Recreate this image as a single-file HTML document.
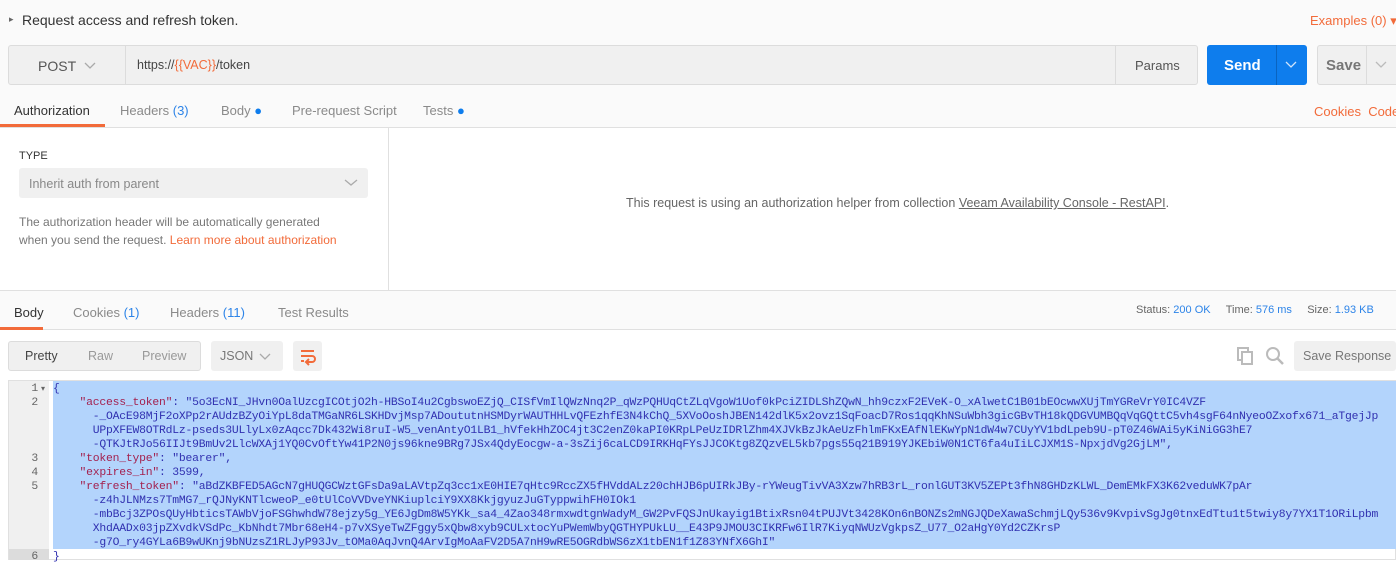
<!DOCTYPE html>
<html><head><meta charset="utf-8"><style>
*{margin:0;padding:0;box-sizing:border-box}
body{width:1396px;height:560px;overflow:hidden;background:#fff;font-family:"Liberation Sans",sans-serif;font-size:12px;color:#505050;position:relative}
.a{position:absolute;white-space:nowrap}
.or{color:#f26b3a}
.bl{color:#2d84e8}
.g{color:#8a8a8a}
.code{font-family:"Liberation Mono",monospace;font-size:11.4px;letter-spacing:-0.21px;line-height:14px;color:#3030b0}
.k{color:#a3214f}
</style></head><body>
<div class="a" style="left:0;top:0;width:1396px;height:128px;background:#fafafa;border-bottom:1px solid #e0e0e0"></div>
<div class="a" style="left:9px;top:14px;font-size:9px;color:#666">&#9656;</div>
<div class="a" style="left:22px;top:12px;font-size:14px;color:#333">Request access and refresh token.</div>
<div class="a or" style="left:1310px;top:13px;font-size:13px">Examples (0) &#9662;</div>
<div class="a" style="left:8px;top:45px;width:1190px;height:40px;background:#f0f0f0;border:1px solid #dcdcdc;border-radius:3px"></div>
<div class="a" style="left:125px;top:46px;width:1px;height:38px;background:#dcdcdc"></div>
<div class="a" style="left:1115px;top:46px;width:1px;height:38px;background:#dcdcdc"></div>
<div class="a" style="left:38px;top:58px;font-size:14px;color:#555">POST</div>
<svg class="a" style="left:84px;top:62px" width="12" height="8"><path d="M1 1L6 6L11 1" fill="none" stroke="#aaa" stroke-width="1.3"/></svg>
<div class="a" style="left:137px;top:58px;font-size:12.5px;color:#444">https://<span class="or">{{VAC}}</span>/token</div>
<div class="a" style="left:1135px;top:58px;font-size:13px;color:#555">Params</div>
<div class="a" style="left:1207px;top:45px;width:100px;height:40px;background:#0e7ded;border-radius:3px"></div>
<div class="a" style="left:1276px;top:45px;width:1px;height:40px;background:#0a64c0"></div>
<div class="a" style="left:1224px;top:57px;font-size:15px;font-weight:bold;color:#fff">Send</div>
<svg class="a" style="left:1285px;top:61px" width="12" height="8"><path d="M1 1L6 6L11 1" fill="none" stroke="#cfe4fb" stroke-width="1.3"/></svg>
<div class="a" style="left:1317px;top:45px;width:90px;height:40px;background:#f0f0f0;border:1px solid #dcdcdc;border-radius:3px"></div>
<div class="a" style="left:1366px;top:46px;width:1px;height:38px;background:#dcdcdc"></div>
<div class="a" style="left:1326px;top:57px;font-size:15px;font-weight:bold;color:#777">Save</div>
<svg class="a" style="left:1375px;top:61px" width="12" height="8"><path d="M1 1L6 6L11 1" fill="none" stroke="#bbb" stroke-width="1.3"/></svg>
<div class="a" style="left:14px;top:103px;font-size:13px;color:#333">Authorization</div>
<div class="a" style="left:0;top:124px;width:105px;height:3px;background:#f26b3a"></div>
<div class="a g" style="left:120px;top:103px;font-size:13px">Headers <span class="bl">(3)</span></div>
<div class="a g" style="left:221px;top:103px;font-size:13px">Body <span style="color:#0e7ded">&#9679;</span></div>
<div class="a g" style="left:292px;top:103px;font-size:13px">Pre-request Script</div>
<div class="a g" style="left:423px;top:103px;font-size:13px">Tests <span style="color:#0e7ded">&#9679;</span></div>
<div class="a or" style="left:1314px;top:104px;font-size:13px">Cookies&nbsp;&nbsp;Code</div>
<div class="a" style="left:388px;top:128px;width:1px;height:162px;background:#e0e0e0"></div>
<div class="a" style="left:19px;top:150px;font-size:11px;color:#333">TYPE</div>
<div class="a" style="left:19px;top:168px;width:349px;height:30px;background:#f0f0f0;border-radius:3px"></div>
<div class="a" style="left:29px;top:177px;font-size:12.5px;color:#888">Inherit auth from parent</div>
<svg class="a" style="left:344px;top:179px" width="14" height="8"><path d="M1 1L7 6L13 1" fill="none" stroke="#aaa" stroke-width="1.3"/></svg>
<div class="a" style="left:19px;top:213px;font-size:12px;color:#777;line-height:18px">The authorization header will be automatically generated<br>when you send the request. <span class="or">Learn more about authorization</span></div>
<div class="a" style="left:626px;top:196px;font-size:12.5px;color:#666">This request is using an authorization helper from collection <span style="text-decoration:underline">Veeam Availability Console - RestAPI</span>.</div>
<div class="a" style="left:0;top:290px;width:1396px;height:40px;background:#fafafa;border-top:1px solid #e0e0e0;border-bottom:1px solid #e0e0e0"></div>
<div class="a" style="left:14px;top:305px;font-size:13px;color:#333">Body</div>
<div class="a" style="left:0;top:327px;width:43px;height:3px;background:#f26b3a"></div>
<div class="a g" style="left:73px;top:305px;font-size:13px">Cookies <span class="bl">(1)</span></div>
<div class="a g" style="left:170px;top:305px;font-size:13px">Headers <span class="bl">(11)</span></div>
<div class="a g" style="left:278px;top:305px;font-size:13px">Test Results</div>
<div class="a" style="left:1136px;top:304px;font-size:11px;color:#666">Status: <span class="bl">200 OK</span>&nbsp;&nbsp;&nbsp;&nbsp; Time: <span class="bl">576 ms</span>&nbsp;&nbsp;&nbsp;&nbsp; Size: <span class="bl">1.93 KB</span></div>
<div class="a" style="left:8px;top:341px;width:193px;height:30px;background:#f0f0f0;border:1px solid #dcdcdc;border-radius:3px"></div>
<div class="a" style="left:25px;top:349px;font-size:12.5px;color:#444">Pretty</div>
<div class="a" style="left:88px;top:349px;font-size:12.5px;color:#999">Raw</div>
<div class="a" style="left:142px;top:349px;font-size:12.5px;color:#999">Preview</div>
<div class="a" style="left:211px;top:341px;width:72px;height:30px;background:#f0f0f0;border-radius:3px"></div>
<div class="a" style="left:220px;top:349px;font-size:12.5px;color:#777">JSON</div>
<svg class="a" style="left:259px;top:353px" width="12" height="8"><path d="M1 1L6 6L11 1" fill="none" stroke="#aaa" stroke-width="1.3"/></svg>
<div class="a" style="left:293px;top:341px;width:29px;height:30px;background:#f0f0f0;border-radius:3px"></div>
<svg class="a" style="left:298px;top:346px" width="20" height="20"><path d="M3 5H16M3 10H14a3 3 0 0 1 0 6H9M11 13L8 16L11 19M3 15H6" fill="none" stroke="#f26b3a" stroke-width="2"/></svg>
<svg class="a" style="left:1236px;top:346px" width="20" height="20"><rect x="2" y="2" width="10" height="12" fill="none" stroke="#bbb" stroke-width="2"/><rect x="6" y="6" width="10" height="12" fill="#fff" stroke="#bbb" stroke-width="2"/></svg>
<svg class="a" style="left:1265px;top:346px" width="20" height="20"><circle cx="8" cy="8" r="6" fill="none" stroke="#bbb" stroke-width="2"/><path d="M12.5 12.5L18 18" stroke="#bbb" stroke-width="2.5"/></svg>
<div class="a" style="left:1294px;top:341px;width:102px;height:30px;background:#f0f0f0;border-radius:3px"></div>
<div class="a" style="left:1303px;top:349px;font-size:12.5px;color:#777">Save Response</div>
<div class="a" style="left:8px;top:380px;width:1388px;height:180px;border:1px solid #e0e0e0"></div>
<div class="a" style="left:9px;top:381px;width:40px;height:179px;background:#f0f0f0"></div>
<div class="a" style="left:9px;top:549px;width:40px;height:11px;background:#dcdcdc"></div>
<div class="a" style="left:53px;top:381px;width:1343px;height:168px;background:#b3d4fc"></div>
<div class="a code" style="left:20px;top:382px;color:#666;text-align:right;width:18px">1<br>2<br><br><br><br>3<br>4<br>5<br><br><br><br><br>6</div>
<div class="a" style="left:41px;top:384px;font-size:8px;color:#666">&#9662;</div>
<div class="a code" style="left:53px;top:382px">{<br>
&nbsp;&nbsp;&nbsp;&nbsp;<span class="k">"access_token"</span>: "5o3EcNI_JHvn0OalUzcgICOtjO2h-HBSoI4u2CgbswoEZjQ_CISfVmIlQWzNnq2P_qWzPQHUqCtZLqVgoW1Uof0kPciZIDLShZQwN_hh9czxF2EVeK-O_xAlwetC1B01bEOcwwXUjTmYGReVrY0IC4VZF<br>
&nbsp;&nbsp;&nbsp;&nbsp;&nbsp;&nbsp;-_OAcE98MjF2oXPp2rAUdzBZyOiYpL8daTMGaNR6LSKHDvjMsp7ADoututnHSMDyrWAUTHHLvQFEzhfE3N4kChQ_5XVoOoshJBEN142dlK5x2ovz1SqFoacD7Ros1qqKhNSuWbh3gicGBvTH18kQDGVUMBQqVqGQttC5vh4sgF64nNyeoOZxofx671_aTgejJp<br>
&nbsp;&nbsp;&nbsp;&nbsp;&nbsp;&nbsp;UPpXFEW8OTRdLz-pseds3ULlyLx0zAqcc7Dk432Wi8ruI-W5_venAntyO1LB1_hVfekHhZOC4jt3C2enZ0kaPI0KRpLPeUzIDRlZhm4XJVkBzJkAeUzFhlmFKxEAfNlEKwYpN1dW4w7CUyYV1bdLpeb9U-pT0Z46WAi5yKiNiGG3hE7<br>
&nbsp;&nbsp;&nbsp;&nbsp;&nbsp;&nbsp;-QTKJtRJo56IIJt9BmUv2LlcWXAj1YQ0CvOftYw41P2N0js96kne9BRg7JSx4QdyEocgw-a-3sZij6caLCD9IRKHqFYsJJCOKtg8ZQzvEL5kb7pgs55q21B919YJKEbiW0N1CT6fa4uIiLCJXM1S-NpxjdVg2GjLM",<br>
&nbsp;&nbsp;&nbsp;&nbsp;<span class="k">"token_type"</span>: "bearer",<br>
&nbsp;&nbsp;&nbsp;&nbsp;<span class="k">"expires_in"</span>: 3599,<br>
&nbsp;&nbsp;&nbsp;&nbsp;<span class="k">"refresh_token"</span>: "aBdZKBFED5AGcN7gHUQGCWztGFsDa9aLAVtpZq3cc1xE0HIE7qHtc9RccZX5fHVddALz20chHJB6pUIRkJBy-rYWeugTivVA3Xzw7hRB3rL_ronlGUT3KV5ZEPt3fhN8GHDzKLWL_DemEMkFX3K62veduWK7pAr<br>
&nbsp;&nbsp;&nbsp;&nbsp;&nbsp;&nbsp;-z4hJLNMzs7TmMG7_rQJNyKNTlcweoP_e0tUlCoVVDveYNKiuplciY9XX8KkjgyuzJuGTyppwihFH0IOk1<br>
&nbsp;&nbsp;&nbsp;&nbsp;&nbsp;&nbsp;-mbBcj3ZPOsQUyHbticsTAWbVjoFSGhwhdW78ejzy5g_YE6JgDm8W5YKk_sa4_4Zao348rmxwdtgnWadyM_GW2PvFQSJnUkayig1BtixRsn04tPUJVt3428KOn6nBONZs2mNGJQDeXawaSchmjLQy536v9KvpivSgJg0tnxEdTtu1t5twiy8y7YX1T1ORiLpbm<br>
&nbsp;&nbsp;&nbsp;&nbsp;&nbsp;&nbsp;XhdAADx03jpZXvdkVSdPc_KbNhdt7Mbr68eH4-p7vXSyeTwZFggy5xQbw8xyb9CULxtocYuPWemWbyQGTHYPUkLU__E43P9JMOU3CIKRFw6IlR7KiyqNWUzVgkpsZ_U77_O2aHgY0Yd2CZKrsP<br>
&nbsp;&nbsp;&nbsp;&nbsp;&nbsp;&nbsp;-g7O_ry4GYLa6B9wUKnj9bNUzsZ1RLJyP93Jv_tOMa0AqJvnQ4ArvIgMoAaFV2D5A7nH9wRE5OGRdbWS6zX1tbEN1f1Z83YNfX6GhI"<br>
}</div>
</body></html>
